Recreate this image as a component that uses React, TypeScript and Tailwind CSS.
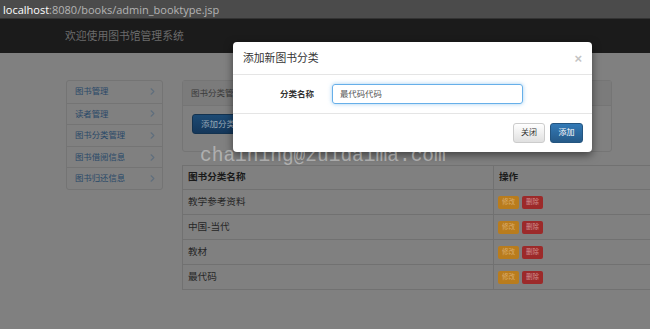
import React from 'react';
import { ChevronRight } from 'lucide-react';

const cjk = { fontFamily: '"Liberation Sans", "Noto Sans CJK SC", sans-serif' };

const menu = ['图书管理', '读者管理', '图书分类管理', '图书借阅信息', '图书归还信息'];
const rows = ['教学参考资料', '中国-当代', '教材', '最代码'];

export default function App() {
  return (
    <div className="relative w-[650px] h-[329px] overflow-hidden bg-[#808080]" style={cjk}>
      {/* address bar */}
      <div className="h-[19px] bg-[#4b4b4b] border-b border-[#333] flex items-center pl-[3px] text-[11px] leading-none">
        <span className="text-white" style={{ fontFamily: '"Open Sans", sans-serif' }}>localhost</span>
        <span className="text-[#b4b4b4]" style={{ fontFamily: '"Open Sans", sans-serif' }}>:8080/books/admin_booktype.jsp</span>
      </div>

      {/* navbar */}
      <div className="h-[34px] bg-[#1b1b1b] flex items-center pl-[65px]">
        <span className="text-[10.8px] leading-none text-[#6b6b6b]">欢迎使用图书馆管理系统</span>
      </div>

      {/* page */}
      <div className="flex pt-[27px] pl-[66px] gap-[19px]">
        <div className="w-[97px] shrink-0 border border-[#747474] rounded-[3px] h-[110px] flex flex-col">
          {menu.map((m, i) => (
            <div
              key={m}
              className={`h-[22px] flex items-center justify-between pl-[8px] pr-[4px] text-[8.4px] text-[#284868] ${i > 0 ? 'border-t border-[#747474]' : ''}`}
            >
              <span>{m}</span>
              <ChevronRight size={11} strokeWidth={2.5} className="text-[#5f6e7d]" />
            </div>
          ))}
        </div>

        <div className="flex flex-col">
          <div className="w-[430px] h-[72px] border border-[#757575] rounded-[3px]">
            <div className="h-[25px] bg-[#7b7b7b] border-b border-[#757575] flex items-center pl-[8px] text-[8.5px] text-[#3a3a3a]">
              图书分类管理
            </div>
            <div className="pl-[9px] pt-[8px]">
              <div className="w-[60px] h-[20px] rounded-[3px] bg-gradient-to-b from-[#1c4a74] to-[#15375a] border border-[#13324f] flex items-center pl-[8px] text-[8.5px] text-[#9aa8b6]">
                添加分类
              </div>
            </div>
          </div>

          <table className="mt-[13px] w-[490px] border-collapse text-[#262626]">
            <thead>
              <tr className="h-[24px]">
                <th className="w-[311px] border border-[#717171] text-left pl-[5px] text-[9.6px] font-bold text-[#1a1a1a]">图书分类名称</th>
                <th className="border border-[#717171] text-left pl-[5px] text-[9.6px] font-bold text-[#1a1a1a]">操作</th>
              </tr>
            </thead>
            <tbody>
              {rows.map((r) => (
                <tr key={r} className="h-[25px]">
                  <td className="border border-[#717171] pl-[5px] text-[9.6px]">{r}</td>
                  <td className="border border-[#717171] pl-[4px]">
                    <div className="flex gap-[3px]">
                      <span className="w-[21px] h-[13px] rounded-[2px] bg-[#b97c1d] text-[#d9ad6e] text-[6.5px] flex items-center justify-center">修改</span>
                      <span className="w-[21px] h-[13px] rounded-[2px] bg-[#9c2a2a] text-[#cf8e8e] text-[6.5px] flex items-center justify-center">删除</span>
                    </div>
                  </td>
                </tr>
              ))}
            </tbody>
          </table>
        </div>
      </div>

      {/* modal */}
      <div className="absolute left-[233px] top-[42px] w-[359px] h-[110px] bg-white rounded-[4px] shadow-[0_3px_9px_rgba(0,0,0,0.5)] flex flex-col">
        <div className="h-[33px] border-b border-[#e5e5e5] flex items-center justify-between pl-[10px] pr-[10px]">
          <span className="text-[10.8px] leading-none text-[#333]">添加新图书分类</span>
          <span className="text-[13px] leading-none font-bold text-[#c4c4c4]">×</span>
        </div>
        <div className="h-[39px] border-b border-[#e5e5e5] flex items-center">
          <span className="w-[81px] text-right text-[8.5px] font-bold text-[#333]">分类名称</span>
          <div className="ml-[18px] w-[191px] h-[20px] rounded-[3px] border border-[#66afe9] shadow-[0_0_4px_rgba(102,175,233,0.6)] flex items-center pl-[7px] text-[8.4px] text-[#555]">
            最代码代码
          </div>
        </div>
        <div className="flex-1 flex justify-end items-start pt-[9px] pr-[9px] gap-[5px]">
          <span className="w-[32px] h-[20px] rounded-[3px] border border-[#ccc] bg-gradient-to-b from-white to-[#e0e0e0] text-[8px] text-[#333] flex items-center justify-center">关闭</span>
          <span className="w-[33px] h-[20px] rounded-[3px] border border-[#245580] bg-gradient-to-b from-[#337ab7] to-[#265a88] text-[8px] text-white flex items-center justify-center">添加</span>
        </div>
      </div>

      {/* watermark */}
      <div
        className="absolute left-[200px] top-[146px] text-[19.5px] leading-[20px] text-white/40 pointer-events-none"
        style={{ fontFamily: '"Liberation Mono", monospace' }}
      >
        chaining@zuidaima.com
      </div>
    </div>
  );
}
